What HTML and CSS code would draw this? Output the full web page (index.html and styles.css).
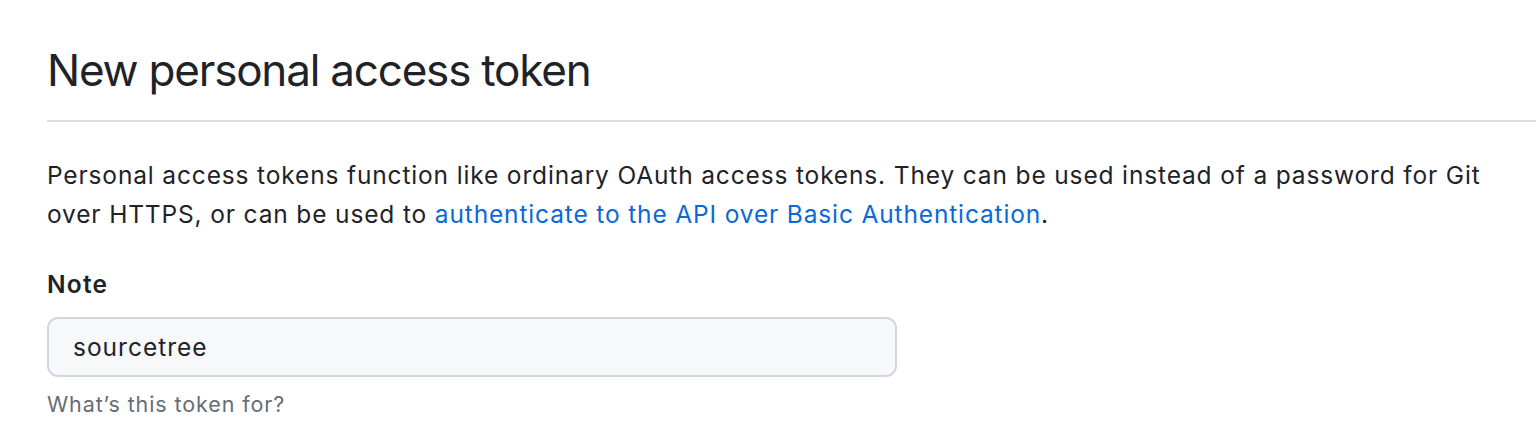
FILE: index.html
```html
<!DOCTYPE html>
<html>
<head>
<meta charset="utf-8">
<link rel="stylesheet" href="styles.css">
</head>
<body>
<div class="page">
  <div class="subhead">
    <h2 class="subhead-heading">New personal access token</h2>
  </div>
  <p class="intro">Personal access tokens function like ordinary OAuth access tokens. They can be used instead of a password for Git over HTTPS, or can be used to <a href="#" class="link">authenticate to the API over Basic Authentication</a>.</p>
  <div class="form-group">
    <label class="label">Note</label>
    <div class="input">sourcetree</div>
    <p class="note">What’s this token for?</p>
  </div>
</div>
</body>
</html>
```

FILE: styles.css
```css
html, body {
  margin: 0;
  padding: 0;
  background: #ffffff;
}
body {
  font-family: Inter, "Liberation Sans", Arial, sans-serif;
  color: #1f2328;
}
.page {
  padding-left: 47px;
  padding-top: 0;
}
.subhead {
  border-bottom: 2px solid #d8dee4;
  padding-top: 44px;
  padding-bottom: 24px;
}
.subhead-heading {
  margin: 0;
  font-size: 44px;
  font-weight: 400;
  line-height: 52px;
  letter-spacing: -1.2px;
}
.intro {
  margin: 34px 0 0 0;
  width: 1489px;
  font-size: 24.5px;
  line-height: 39px;
  letter-spacing: 0.85px;
}
.link {
  color: #0969da;
  text-decoration: none;
}
.form-group {
  margin-top: 35px;
}
.label {
  display: block;
  font-size: 24.5px;
  font-weight: 600;
  line-height: 30px;
  letter-spacing: 1.2px;
}
.input {
  box-sizing: border-box;
  margin-top: 18px;
  width: 850px;
  height: 60px;
  border: 2px solid #d0d7de;
  border-radius: 11px;
  background: #f6f8fa;
  padding-left: 24px;
  font-size: 24.5px;
  line-height: 56px;
  letter-spacing: 1px;
  color: #1f2328;
}
.note {
  margin: 12px 0 0 0;
  font-size: 21.5px;
  line-height: 30px;
  letter-spacing: 0.9px;
  color: #656d76;
}
```
